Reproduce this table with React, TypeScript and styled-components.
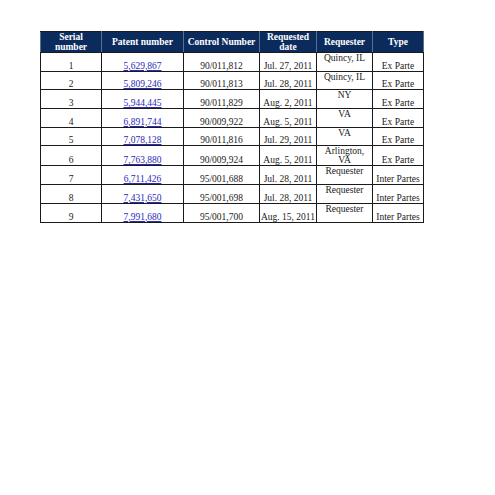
import styled, { createGlobalStyle } from 'styled-components';

const GlobalStyle = createGlobalStyle`
  html, body {
    margin: 0;
    padding: 0;
    background: #ffffff;
  }
`;

type Row = {
  serial: number;
  patent: string;
  control: string;
  date: string;
  requester: string[];
  type: string;
};

const rows: Row[] = [
  { serial: 1, patent: '5,629,867', control: '90/011,812', date: 'Jul. 27, 2011', requester: ['Quincy, IL'], type: 'Ex Parte' },
  { serial: 2, patent: '5,809,246', control: '90/011,813', date: 'Jul. 28, 2011', requester: ['Quincy, IL'], type: 'Ex Parte' },
  { serial: 3, patent: '5,944,445', control: '90/011,829', date: 'Aug. 2, 2011', requester: ['NY'], type: 'Ex Parte' },
  { serial: 4, patent: '6,891,744', control: '90/009,922', date: 'Aug. 5, 2011', requester: ['VA'], type: 'Ex Parte' },
  { serial: 5, patent: '7,078,128', control: '90/011,816', date: 'Jul. 29, 2011', requester: ['VA'], type: 'Ex Parte' },
  { serial: 6, patent: '7,763,880', control: '90/009,924', date: 'Aug. 5, 2011', requester: ['Arlington,', 'VA'], type: 'Ex Parte' },
  { serial: 7, patent: '6,711,426', control: '95/001,688', date: 'Jul. 28, 2011', requester: ['Requester'], type: 'Inter Partes' },
  { serial: 8, patent: '7,431,650', control: '95/001,698', date: 'Jul. 28, 2011', requester: ['Requester'], type: 'Inter Partes' },
  { serial: 9, patent: '7,991,680', control: '95/001,700', date: 'Aug. 15, 2011', requester: ['Requester'], type: 'Inter Partes' },
];

const columns = [
  { label: ['Serial', 'number'], width: 61 },
  { label: ['Patent number'], width: 82 },
  { label: ['Control Number'], width: 76 },
  { label: ['Requested', 'date'], width: 57 },
  { label: ['Requester'], width: 56 },
  { label: ['Type'], width: 51 },
];

export default function App() {
  return (
    <Page>
      <GlobalStyle />
      <Table>
        <colgroup>
          {columns.map((c, i) => (
            <col key={i} style={{ width: c.width }} />
          ))}
        </colgroup>
        <thead>
          <tr>
            {columns.map((c, i) => (
              <HeadCell key={i}>
                {c.label.map((l, j) => (
                  <Line key={j}>{l}</Line>
                ))}
              </HeadCell>
            ))}
          </tr>
        </thead>
        <tbody>
          {rows.map((r) => (
            <BodyRow key={r.serial}>
              <Cell>{r.serial}</Cell>
              <Cell>
                <PatentLink href="#">{r.patent}</PatentLink>
              </Cell>
              <Cell>{r.control}</Cell>
              <Cell>{r.date}</Cell>
              <RequesterCell>
                {r.requester.map((l, j) => (
                  <Line key={j}>{l}</Line>
                ))}
              </RequesterCell>
              <Cell>{r.type}</Cell>
            </BodyRow>
          ))}
        </tbody>
      </Table>
    </Page>
  );
}

const Page = styled.div`
  padding: 31px 0 0 40px;
  font-family: 'Liberation Serif', 'Times New Roman', serif;
`;

const Table = styled.table`
  border-collapse: collapse;
  table-layout: fixed;
  width: 384px;
  border: 1px solid #1a1a1a;
`;

const HeadCell = styled.th`
  background: #0c2b5d;
  color: #ffffff;
  font-weight: bold;
  font-size: 9.5px;
  line-height: 10px;
  height: 20px;
  padding: 0 1px;
  text-align: center;
  vertical-align: middle;
  border: 1px solid #5a6f90;
  border-top-color: #1a1a1a;
  border-bottom: 1px solid #1a1a1a;
`;

const Line = styled.div`
  white-space: nowrap;
`;

const BodyRow = styled.tr`
  height: 18.7px;
`;

const Cell = styled.td`
  border: 1px solid #1a1a1a;
  font-size: 9.5px;
  line-height: 10px;
  color: #1a1a1a;
  text-align: center;
  vertical-align: bottom;
  padding: 0 1px;
  white-space: nowrap;
  overflow: hidden;
`;

const RequesterCell = styled.td`
  border: 1px solid #1a1a1a;
  font-size: 9.5px;
  line-height: 9px;
  color: #1a1a1a;
  text-align: center;
  vertical-align: top;
  padding: 1px 1px 0;
  overflow: hidden;
`;

const PatentLink = styled.a`
  color: #2a2ab8;
  text-decoration: underline;
`;
